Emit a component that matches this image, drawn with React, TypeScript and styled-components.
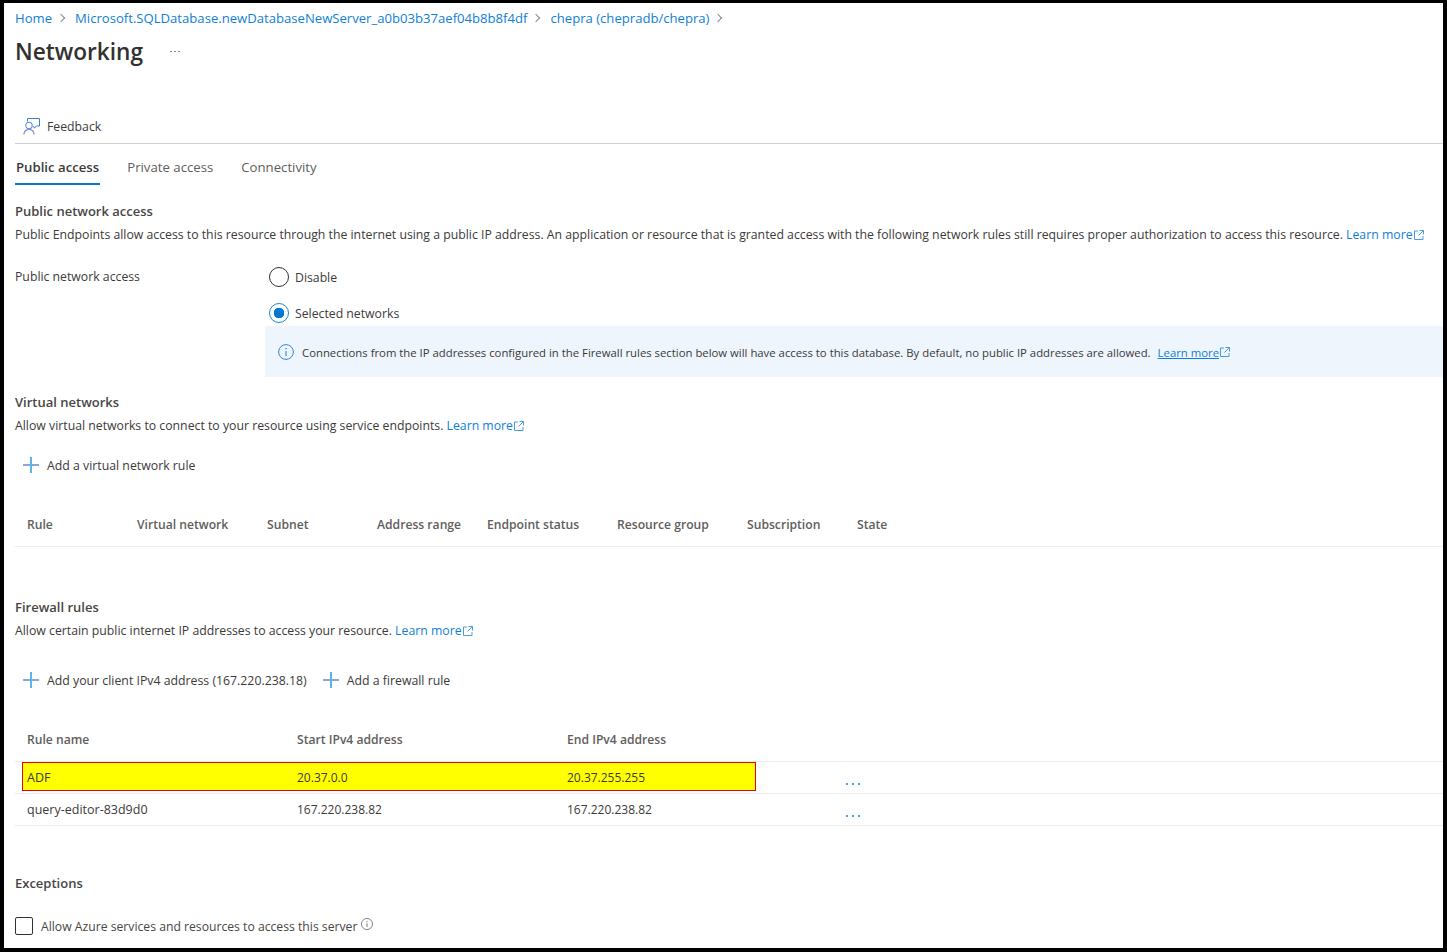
import styled, { createGlobalStyle } from 'styled-components'

const GlobalStyle = createGlobalStyle`
  html, body {
    margin: 0;
    padding: 0;
    background: #000;
  }
  body {
    font-family: 'Open Sans', 'Noto Sans', sans-serif;
    font-size: 12.25px;
    color: #3b3a39;
  }
`

function ExternalIcon() {
  return (
    <ExtSvg viewBox="0 0 10 10" width="10" height="10">
      <path d="M4 1H.5v8.500H9V6" fill="none" stroke="#4a9ce0" strokeWidth="1" />
      <path d="M5.500.5h4v4M9.500.5L4.500 5.500" fill="none" stroke="#4a9ce0" strokeWidth="1" />
    </ExtSvg>
  )
}

function LearnMore({ underline }: { underline?: boolean }) {
  return (
    <LearnLink>
      <LearnText $underline={underline}>Learn more</LearnText>
      <ExternalIcon />
    </LearnLink>
  )
}

function PlusIcon() {
  return (
    <svg viewBox="0 0 16 16" width="16" height="16">
      <path d="M0 8h16" stroke="#8da6de" strokeWidth="2" />
      <path d="M8 0v16" stroke="#5cb4ee" strokeWidth="2" />
    </svg>
  )
}

function FeedbackIcon() {
  return (
    <svg viewBox="0 0 18 17" width="18" height="17" fill="none">
      <path d="M4.500 3.500V.5h12V8h-3l-2 2.200L10.500 8" stroke="#3f7fd0" strokeWidth="1" />
      <circle cx="6" cy="7.500" r="3.200" stroke="#5f86e0" strokeWidth="1.100" />
      <path d="M.8 16.500c.4-3 2.400-5 5.200-5s4.800 2 5.200 5" stroke="#7a7fdc" strokeWidth="1.100" />
    </svg>
  )
}

function InfoIcon({ size, color }: { size: number; color: string }) {
  return (
    <svg viewBox="0 0 16 16" width={size} height={size} fill="none">
      <circle cx="8" cy="8" r="7.400" stroke={color} strokeWidth="1" />
      <path d="M8 7v5" stroke={color} strokeWidth="1.100" />
      <circle cx="8" cy="4.800" r=".8" fill={color} />
    </svg>
  )
}

const vnetColumns = ['Rule', 'Virtual network', 'Subnet', 'Address range', 'Endpoint status', 'Resource group', 'Subscription', 'State']
const vnetWidths = [110, 130, 110, 110, 130, 130, 110, 110]

const firewallRows = [
  { name: 'ADF', start: '20.37.0.0', end: '20.37.255.255', marked: true },
  { name: 'query-editor-83d9d0', start: '167.220.238.82', end: '167.220.238.82', marked: false },
]

export default function App() {
  return (
    <Frame>
      <GlobalStyle />
      <Breadcrumbs>
        <Crumb>Home</Crumb>
        <Chevron />
        <Crumb>Microsoft.SQLDatabase.newDatabaseNewServer_a0b03b37aef04b8b8f4df</Crumb>
        <Chevron />
        <Crumb>chepra (chepradb/chepra)</Crumb>
        <Chevron />
      </Breadcrumbs>

      <TitleRow>
        <Title>Networking</Title>
        <MoreDots>
          <i />
          <i />
          <i />
        </MoreDots>
      </TitleRow>

      <Toolbar>
        <FeedbackIcon />
        <ToolLabel>Feedback</ToolLabel>
      </Toolbar>

      <Tabs>
        <Tab $active>Public access</Tab>
        <Tab>Private access</Tab>
        <Tab>Connectivity</Tab>
      </Tabs>

      <SectionTitle $top={18}>Public network access</SectionTitle>
      <Description>
        Public Endpoints allow access to this resource through the internet using a public IP address. An application or resource that is granted access with the following network rules still requires proper authorization to access this resource. <LearnMore />
      </Description>

      <AccessRow>
        <FieldLabel>Public network access</FieldLabel>
        <RadioColumn>
          <RadioRow>
            <Radio />
            <span>Disable</span>
          </RadioRow>
          <RadioRow>
            <Radio $checked />
            <span>Selected networks</span>
          </RadioRow>
        </RadioColumn>
      </AccessRow>

      <InfoBox>
        <InfoIcon size={16} color="#2b88d8" />
        <InfoText>
          Connections from the IP addresses configured in the Firewall rules section below will have access to this database. By default, no public IP addresses are allowed.
        </InfoText>
        <LearnMore underline />
      </InfoBox>

      <SectionTitle $top={17}>Virtual networks</SectionTitle>
      <Description>
        Allow virtual networks to connect to your resource using service endpoints. <LearnMore />
      </Description>

      <AddBar $top={21}>
        <AddButton>
          <PlusIcon />
          <span>Add a virtual network rule</span>
        </AddButton>
      </AddBar>

      <VnetHeader>
        {vnetColumns.map((c, i) => (
          <HeaderCell key={c} $width={vnetWidths[i]}>{c}</HeaderCell>
        ))}
      </VnetHeader>

      <SectionTitle $top={52}>Firewall rules</SectionTitle>
      <Description>
        Allow certain public internet IP addresses to access your resource. <LearnMore />
      </Description>

      <AddBar $top={31}>
        <AddButton>
          <PlusIcon />
          <span>Add your client IPv4 address (167.220.238.18)</span>
        </AddButton>
        <AddButton>
          <PlusIcon />
          <span>Add a firewall rule</span>
        </AddButton>
      </AddBar>

      <FirewallHeader>
        <HeaderCell $width={270}>Rule name</HeaderCell>
        <HeaderCell $width={270}>Start IPv4 address</HeaderCell>
        <HeaderCell $width={270}>End IPv4 address</HeaderCell>
      </FirewallHeader>

      {firewallRows.map((r) => (
        <FirewallRow key={r.name} $marked={r.marked}>
          <NameCell>{r.name}</NameCell>
          <AddressCell>{r.start}</AddressCell>
          <AddressCell>{r.end}</AddressCell>
          <RowDots>
            <i />
            <i />
            <i />
          </RowDots>
        </FirewallRow>
      ))}

      <SectionTitle $top={49}>Exceptions</SectionTitle>
      <CheckRow>
        <CheckBox />
        <span>Allow Azure services and resources to access this server</span>
        <InfoIcon size={12} color="#605e5c" />
      </CheckRow>
    </Frame>
  )
}

const Frame = styled.div`
  box-sizing: border-box;
  width: 1447px;
  height: 952px;
  overflow: hidden;
  background: #fff;
  border: solid #000;
  border-width: 3px 4px 4px 4px;
  padding-left: 11px;
`

const Breadcrumbs = styled.div`
  display: flex;
  align-items: center;
  height: 17px;
  margin-top: 6px;
  font-size: 13.12px;
`

const Crumb = styled.a`
  color: #0f7fd6;
`

const Chevron = styled.span`
  width: 5px;
  height: 5px;
  margin: 0 11px 0 6px;
  border-top: 1px solid #8a8886;
  border-right: 1px solid #8a8886;
  transform: rotate(45deg);
`

const TitleRow = styled.div`
  display: flex;
  align-items: center;
  height: 30px;
  margin-top: 10px;
`

const Title = styled.h1`
  margin: 0;
  font-size: 22.65px;
  font-weight: 600;
  color: #323130;
`

const MoreDots = styled.span`
  display: flex;
  gap: 2px;
  margin: 1px 0 0 27px;

  i {
    width: 2px;
    height: 1px;
    background: #8a8886;
  }
`

const Toolbar = styled.div`
  display: flex;
  align-items: center;
  height: 34px;
  margin-top: 43px;
  padding-left: 8px;
  gap: 6px;
  border-bottom: 1px solid #d2d0ce;
`

const ToolLabel = styled.span`
  color: #3b3a39;
`

const Tabs = styled.div`
  display: flex;
  gap: 26px;
  height: 41px;
`

const Tab = styled.div<{ $active?: boolean }>`
  display: flex;
  align-items: center;
  box-sizing: border-box;
  height: 41px;
  padding: 6px 1px 0;
  font-size: 13.2px;
  font-weight: ${(p) => (p.$active ? 600 : 400)};
  color: ${(p) => (p.$active ? '#3b3a39' : '#605e5c')};
  border-bottom: 2px solid ${(p) => (p.$active ? '#0078d4' : 'transparent')};
`

const SectionTitle = styled.h2<{ $top: number }>`
  margin: ${(p) => p.$top}px 0 0;
  font-size: 13px;
  line-height: 17px;
  font-weight: 600;
  color: #484644;
`

const Description = styled.p`
  margin: 6px 0 0;
  font-size: 12.28px;
  line-height: 17px;
  white-space: nowrap;
`

const LearnLink = styled.span`
  display: inline-flex;
  align-items: center;
  gap: 1px;
  color: #0f7fd6;
`

const LearnText = styled.span<{ $underline?: boolean }>`
  text-decoration: ${(p) => (p.$underline ? 'underline' : 'none')};
`

const ExtSvg = styled.svg`
  flex: none;
`

const AccessRow = styled.div`
  display: grid;
  grid-template-columns: 254px 1fr;
  margin-top: 24px;
`

const FieldLabel = styled.div`
  line-height: 20px;
`

const RadioColumn = styled.div`
  display: flex;
  flex-direction: column;
  gap: 16px;
`

const RadioRow = styled.label`
  display: flex;
  align-items: center;
  gap: 6px;
  height: 20px;
`

const Radio = styled.span<{ $checked?: boolean }>`
  box-sizing: border-box;
  width: 20px;
  height: 20px;
  border-radius: 50%;
  border: ${(p) => (p.$checked ? '1.5px solid #1a86d8' : '1px solid #323130')};
  background: ${(p) => (p.$checked ? 'radial-gradient(circle, #0078d4 0 5px, #fff 5.5px)' : '#fff')};
`

const InfoBox = styled.div`
  display: flex;
  align-items: center;
  box-sizing: border-box;
  height: 51px;
  margin: 3px 0 0 250px;
  padding: 1px 0 0 13px;
  background: #eef5fd;
  font-size: 11.34px;
`

const InfoText = styled.span`
  margin: 0 7px 0 8px;
`

const AddBar = styled.div<{ $top: number }>`
  display: flex;
  gap: 16px;
  margin-top: ${(p) => p.$top}px;
  padding-left: 8px;
`

const AddButton = styled.div`
  display: flex;
  align-items: center;
  gap: 8px;
  height: 20px;
  font-size: 12.3px;
`

const VnetHeader = styled.div`
  display: flex;
  align-items: center;
  height: 44px;
  margin-top: 27px;
  padding-left: 12px;
  border-bottom: 1px solid #edebe9;
`

const HeaderCell = styled.div<{ $width: number }>`
  flex: none;
  width: ${(p) => p.$width}px;
  font-size: 12.15px;
  font-weight: 600;
  color: #605e5c;
`

const FirewallHeader = styled.div`
  display: flex;
  align-items: center;
  height: 44px;
  margin-top: 27px;
  padding-left: 12px;
  border-bottom: 1px solid #edebe9;
`

const FirewallRow = styled.div<{ $marked?: boolean }>`
  position: relative;
  display: flex;
  align-items: center;
  height: 31px;
  padding-left: 12px;
  border-bottom: 1px solid #edebe9;

  ${(p) =>
    p.$marked &&
    `
    &::before {
      content: '';
      position: absolute;
      left: 7px;
      top: 0;
      width: 732px;
      height: 27px;
      background: #ffff00;
      border: 1px solid #e6001f;
    }
  `}
`

const NameCell = styled.div`
  position: relative;
  flex: none;
  width: 270px;
  font-size: 12.5px;
`

const AddressCell = styled.div`
  position: relative;
  flex: none;
  width: 270px;
  font-size: 12px;
`

const RowDots = styled.div`
  display: flex;
  gap: 4px;
  margin: 13px 0 0 9px;

  i {
    width: 2px;
    height: 2px;
    background: #4a9ce0;
  }
`

const CheckRow = styled.div`
  display: flex;
  align-items: center;
  height: 20px;
  margin-top: 24px;
  gap: 8px;
  font-size: 12.2px;
  color: #484644;

  svg {
    margin: -4px 0 0 -4px;
  }
`

const CheckBox = styled.span`
  box-sizing: border-box;
  width: 18px;
  height: 18px;
  border: 1px solid #323130;
  border-radius: 2px;
`
